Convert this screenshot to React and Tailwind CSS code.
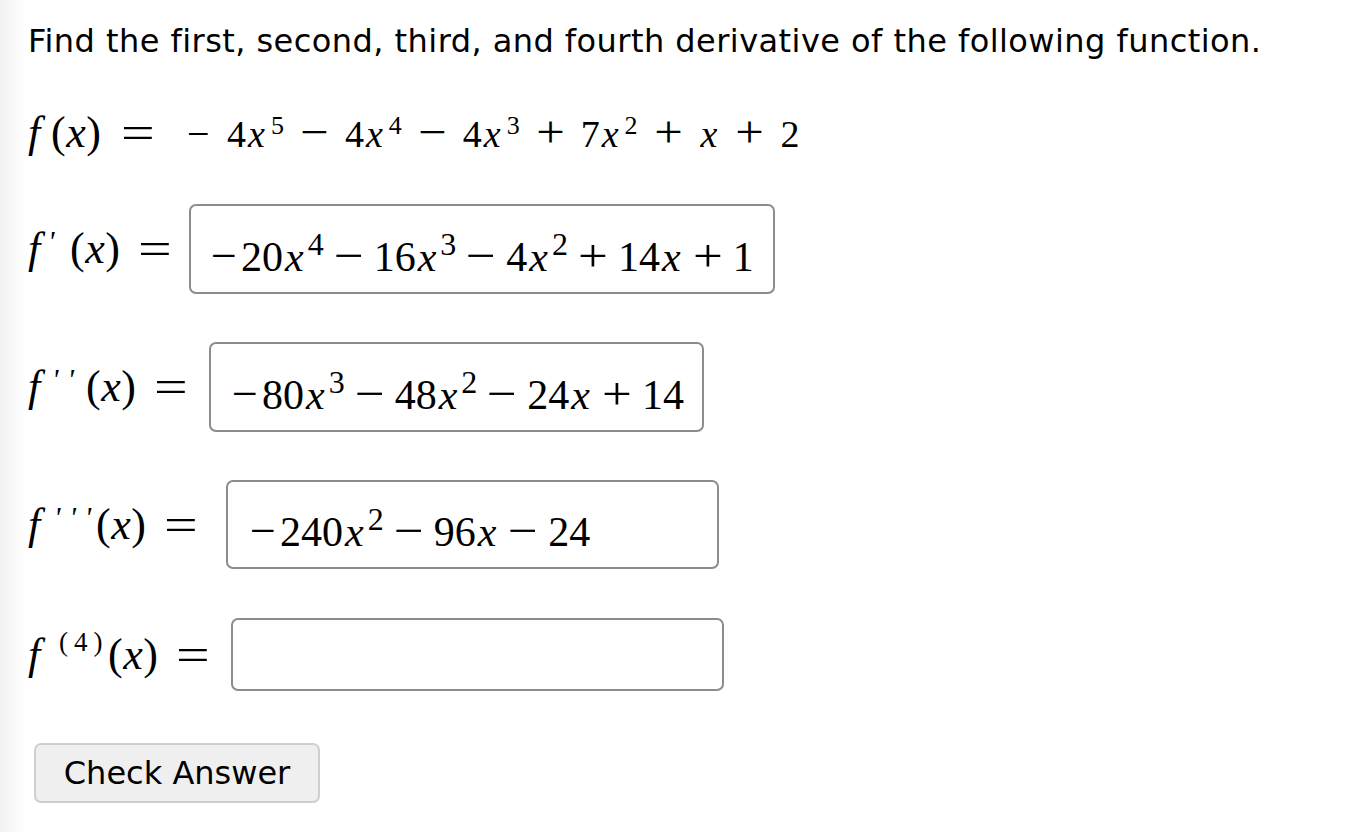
import React from "react";

const serif = "font-['Liberation_Serif','Times_New_Roman',serif]";
const sans = "font-['DejaVu_Sans','Verdana',sans-serif]";

function I({ children, cls = "" }) {
  return <span className={`italic ${cls}`}>{children}</span>;
}

/* slot that holds an operator glyph, widened a little like Computer Modern */
function Op({ children, w, size }) {
  return (
    <span className={`inline-block text-center ${w}`}>
      <span className={`inline-block scale-x-[1.15] ${size}`}>{children}</span>
    </span>
  );
}

function Eq() {
  return (
    <span className="inline-block w-[30px] text-center text-[46px] leading-none">
      <span className="inline-block scale-x-[1.3]">=</span>
    </span>
  );
}

function Paren() {
  return (
    <span className="inline-flex w-[50px] justify-between text-[44px] leading-none">
      <span>(</span>
      <I>x</I>
      <span>)</span>
    </span>
  );
}

function TopLine() {
  const sup = "text-[26px] align-[13px] ml-[4px]";
  const xx = "mx-[2px]";
  const op = (c) => (
    <Op w="w-[61px]" size="text-[44px]">
      {c}
    </Op>
  );
  return (
    <div className={`flex items-center h-[50px] leading-none whitespace-nowrap ${serif}`}>
      <span className="inline-block w-[23px] text-[44px]">
        <I>f</I>
      </span>
      <Paren />
      <span className="ml-[22px]">
        <Eq />
      </span>
      <span className="ml-[34px] text-[38px] whitespace-nowrap">
        <span className="inline-block w-[40px] text-[40px]">−</span>
        4<I cls={xx}>x</I><span className={sup}>5</span>
        {op("−")}
        4<I cls={xx}>x</I><span className={sup}>4</span>
        {op("−")}
        4<I cls={xx}>x</I><span className={sup}>3</span>
        {op("+")}
        7<I cls={xx}>x</I><span className={sup}>2</span>
        {op("+")}
        <I cls={xx}>x</I>
        {op("+")}
        2
      </span>
    </div>
  );
}

function Label({ mid, midW }) {
  return (
    <span className={`flex items-center leading-none whitespace-nowrap ${serif}`}>
      <span className="inline-block w-[20px] text-[44px]">
        <I>f</I>
      </span>
      <span className={`inline-block ${midW}`}>{mid}</span>
      <Paren />
      <span className="ml-[20px]">
        <Eq />
      </span>
    </span>
  );
}

function Primes({ n, pl = "" }) {
  return (
    <span className={`flex gap-[9px] text-[30px] italic relative top-[-8px] ${pl}`}>
      {Array.from({ length: n }).map((_, i) => (
        <span key={i}>'</span>
      ))}
    </span>
  );
}

function Box({ children, w, h, ml }) {
  return (
    <div className={`flex items-center border-2 border-[#8c8c8c] rounded-[7px] bg-white ${w} ${h} ${ml}`}>
      {children}
    </div>
  );
}

function BoxMath({ children, pl }) {
  return (
    <div className={`text-[42px] leading-none whitespace-nowrap pt-[8px] ${pl} ${serif}`}>
      <span className="inline-block w-[30px] text-[46px]">−</span>
      {children}
    </div>
  );
}

export default function App() {
  const sup = "text-[32px] align-[16px] ml-[2px]";
  const xx = "mx-[2px]";
  const op = (c) => (
    <Op w="w-[50px]" size="text-[46px]">
      {c}
    </Op>
  );
  return (
    <div className="min-h-screen w-full bg-[linear-gradient(to_right,#f1f1f1,#ffffff_26px)] pl-[28px] pt-[22px] text-black">
      <p className={`text-[32px] leading-[38px] tracking-[0.45px] whitespace-nowrap ${sans}`}>
        Find the first, second, third, and fourth derivative of the following function.
      </p>

      <div className="mt-[48px]">
        <TopLine />
      </div>

      <div className="mt-[46px] flex items-center">
        <Label midW="w-[22px]" mid={<Primes n={1} />} />
        <Box w="w-[586px]" h="h-[90px]" ml="ml-[19px]">
          <BoxMath pl="pl-[20px]">
            20<I cls={xx}>x</I><span className={sup}>4</span>
            {op("−")}16<I cls={xx}>x</I><span className={sup}>3</span>
            {op("−")}4<I cls={xx}>x</I><span className={sup}>2</span>
            {op("+")}14<I cls={xx}>x</I>
            {op("+")}1
          </BoxMath>
        </Box>
      </div>

      <div className="mt-[48px] flex items-center">
        <Label midW="w-[38px]" mid={<Primes n={2} pl="pl-[4px]" />} />
        <Box w="w-[495px]" h="h-[90px]" ml="ml-[23px]">
          <BoxMath pl="pl-[21px]">
            80<I cls={xx}>x</I><span className={sup}>3</span>
            {op("−")}48<I cls={xx}>x</I><span className={sup}>2</span>
            {op("−")}24<I cls={xx}>x</I>
            {op("+")}14
          </BoxMath>
        </Box>
      </div>

      <div className="mt-[48px] flex items-center">
        <Label midW="w-[48px]" mid={<Primes n={3} pl="pl-[6px]" />} />
        <Box w="w-[493px]" h="h-[89px]" ml="ml-[30px]">
          <BoxMath pl="pl-[22px]">
            240<I cls={xx}>x</I><span className={sup}>2</span>
            {op("−")}96<I cls={xx}>x</I>
            {op("−")}24
          </BoxMath>
        </Box>
      </div>

      <div className="mt-[49px] flex items-center">
        <Label
          midW="w-[60px]"
          mid={
            <span className="flex gap-[6px] text-[27px] relative top-[-12px] pl-[11px]">
              <span>(</span>
              <span>4</span>
              <span>)</span>
            </span>
          }
        />
        <Box w="w-[493px]" h="h-[73px]" ml="ml-[23px]" />
      </div>

      <button
        className={`mt-[52px] ml-[6px] w-[286px] h-[60px] bg-[#efefef] border-2 border-[#cfcfcf] rounded-[7px] text-[32px] text-black ${sans}`}
      >
        Check Answer
      </button>
    </div>
  );
}
